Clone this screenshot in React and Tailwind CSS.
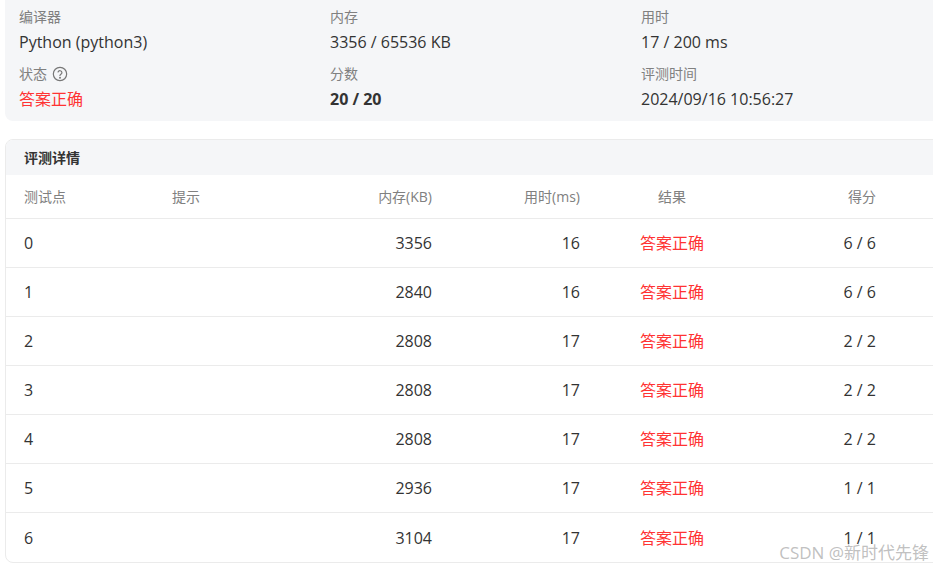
import React from "react";

const font = { fontFamily: '"Open Sans", "Noto Sans CJK SC", sans-serif' };

function QIcon() {
  return (
    <svg width="16" height="16" viewBox="0 0 24 24" fill="none" stroke="#777" strokeWidth="1.8" strokeLinecap="round" strokeLinejoin="round">
      <circle cx="12" cy="12" r="10" />
      <path d="M9.1 9a3 3 0 0 1 5.8 1c0 2-3 2.6-3 4.2" />
      <circle cx="12" cy="17.6" r="0.6" fill="#777" />
    </svg>
  );
}

const rows = [
  ["0", "3356", "16", "6 / 6"],
  ["1", "2840", "16", "6 / 6"],
  ["2", "2808", "17", "2 / 2"],
  ["3", "2808", "17", "2 / 2"],
  ["4", "2808", "17", "2 / 2"],
  ["5", "2936", "17", "1 / 1"],
  ["6", "3104", "17", "1 / 1"],
];

function Info({ label, value, red, bold, icon }) {
  return (
    <div className="flex flex-col">
      <div className="flex items-center gap-[5px] text-[14px] leading-[20px] text-[#808080]">
        {label}
        {icon && <QIcon />}
      </div>
      <div
        className={
          "text-[16px] leading-[24px] mt-[3px] " +
          (red ? "text-[#ff3333]" : "text-[#333333]") +
          (bold ? " font-bold" : "")
        }
      >
        {value}
      </div>
    </div>
  );
}

export default function App() {
  return (
    <div className="w-[933px] h-[568px] overflow-hidden bg-white relative" style={font}>
      <div className="ml-[5px] w-[960px] bg-[#f5f6f8] rounded-b-[8px] pl-[14px] pt-[7px] pb-[10px]">
        <div className="grid grid-cols-[311px_311px_1fr] gap-y-[10px]">
          <Info label="编译器" value="Python (python3)" />
          <Info label="内存" value="3356 / 65536 KB" />
          <Info label="用时" value="17 / 200 ms" />
          <Info label="状态" value="答案正确" red icon />
          <Info label="分数" value="20 / 20" bold />
          <Info label="评测时间" value="2024/09/16 10:56:27" />
        </div>
      </div>

      <div className="ml-[5px] mt-[18px] w-[960px] border border-[#ebebeb] rounded-[8px] overflow-hidden">
        <div className="h-[35px] bg-[#f5f6f8] flex items-center pl-[18px] text-[14px] font-bold text-[#333333]">
          评测详情
        </div>
        <div className="grid grid-cols-[148px_148px_148px_148px_148px_148px] h-[44px] items-center border-b border-[#ebebeb] text-[14px] text-[#808080]">
          <div className="px-[18px]">测试点</div>
          <div className="px-[18px]">提示</div>
          <div className="px-[18px] text-right">内存(KB)</div>
          <div className="px-[18px] text-right">用时(ms)</div>
          <div className="px-[18px] text-center">结果</div>
          <div className="px-[18px] text-right">得分</div>
        </div>
        {rows.map((r, i) => (
          <div
            key={r[0]}
            className={
              "grid grid-cols-[148px_148px_148px_148px_148px_148px] h-[49px] items-center text-[16px] text-[#333333] " +
              (i < rows.length - 1 ? "border-b border-[#ebebeb]" : "")
            }
          >
            <div className="px-[18px]">{r[0]}</div>
            <div className="px-[18px]"></div>
            <div className="px-[18px] text-right">{r[1]}</div>
            <div className="px-[18px] text-right">{r[2]}</div>
            <div className="px-[18px] text-center text-[#ff3333]">答案正确</div>
            <div className="px-[18px] text-right">{r[3]}</div>
          </div>
        ))}
      </div>

      <div className="absolute right-[4px] bottom-[5px] text-[17px] leading-[20px] text-[#b0b0b0]/80">
        CSDN @新时代先锋
      </div>
    </div>
  );
}
